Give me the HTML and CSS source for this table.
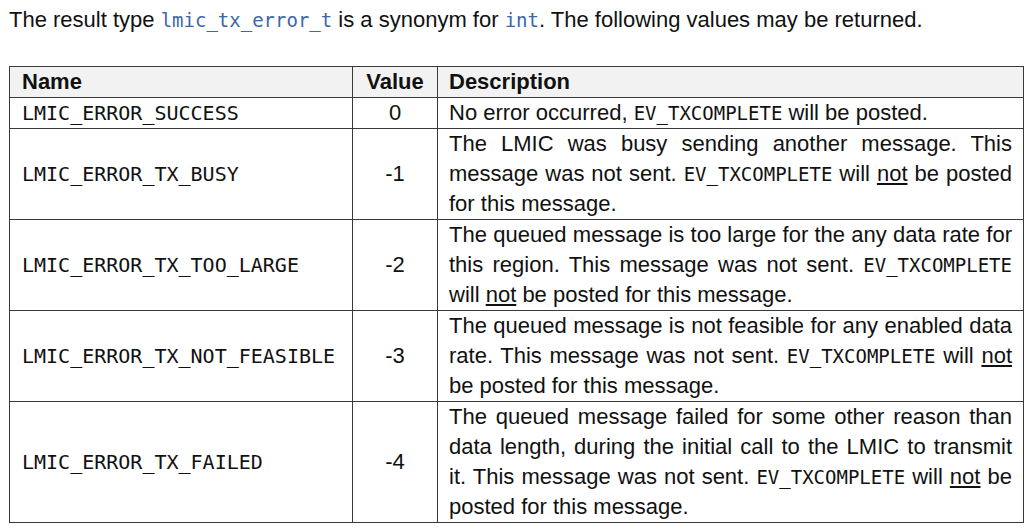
FILE: index.html
```html
<!DOCTYPE html>
<html>
<head>
<meta charset="utf-8">
<link rel="stylesheet" href="styles.css">
</head>
<body>
<p class="intro">The result type <code class="ref">lmic_tx_error_t</code> is a synonym for <code class="ref">int</code>. The following values may be returned.</p>
<table class="errors">
  <colgroup>
    <col class="c-name">
    <col class="c-value">
    <col class="c-desc">
  </colgroup>
  <thead>
    <tr>
      <th class="name">Name</th>
      <th class="value">Value</th>
      <th class="desc">Description</th>
    </tr>
  </thead>
  <tbody>
    <tr>
      <td class="name">LMIC_ERROR_SUCCESS</td>
      <td class="value">0</td>
      <td class="desc">No error occurred, <code>EV_TXCOMPLETE</code> will be posted.</td>
    </tr>
    <tr>
      <td class="name">LMIC_ERROR_TX_BUSY</td>
      <td class="value">-1</td>
      <td class="desc">The LMIC was busy sending another message. This message was not sent. <code>EV_TXCOMPLETE</code> will <u>not</u> be posted for this message.</td>
    </tr>
    <tr>
      <td class="name">LMIC_ERROR_TX_TOO_LARGE</td>
      <td class="value">-2</td>
      <td class="desc">The queued message is too large for the any data rate for this region. This message was not sent. <code>EV_TXCOMPLETE</code> will <u>not</u> be posted for this message.</td>
    </tr>
    <tr>
      <td class="name">LMIC_ERROR_TX_NOT_FEASIBLE</td>
      <td class="value">-3</td>
      <td class="desc">The queued message is not feasible for any enabled data rate. This message was not sent. <code>EV_TXCOMPLETE</code> will <u>not</u> be posted for this message.</td>
    </tr>
    <tr>
      <td class="name">LMIC_ERROR_TX_FAILED</td>
      <td class="value">-4</td>
      <td class="desc">The queued message failed for some other reason than data length, during the initial call to the LMIC to transmit it. This message was not sent. <code>EV_TXCOMPLETE</code> will <u>not</u> be posted for this message.</td>
    </tr>
  </tbody>
</table>
</body>
</html>
```
FILE: styles.css
```css
html, body {
  background: #ffffff;
}
body {
  margin: 0;
  padding: 6px 9px 0 9px;
  font-family: "Liberation Sans", Arial, sans-serif;
  color: #111111;
}
.intro {
  margin: 0;
  font-size: 22px;
  line-height: 28px;
}
.ref {
  font-family: "DejaVu Sans Mono", "Liberation Mono", monospace;
  font-size: 19px;
  color: #3c67a8;
}
.errors {
  margin-top: 32px;
  border-collapse: collapse;
  table-layout: fixed;
  width: 1014px;
}
.c-name { width: 343px; }
.c-value { width: 85px; }
.c-desc { width: 586px; }
.errors th,
.errors td {
  border: 1px solid #3a3a3a;
  padding: 0;
  line-height: 30px;
  vertical-align: middle;
}
.errors thead th {
  background: #f2f2f2;
  font-size: 22px;
  font-weight: bold;
  text-align: left;
  color: #111111;
}
.errors th.name,
.errors td.name {
  padding-left: 12px;
}
.errors th.value,
.errors td.value {
  text-align: center;
}
.errors th.desc,
.errors td.desc {
  padding-left: 11px;
  padding-right: 11px;
}
.errors td.name {
  font-family: "DejaVu Sans Mono", "Liberation Mono", monospace;
  font-size: 20px;
}
.errors td.value {
  font-size: 22px;
}
.errors td.desc {
  font-size: 22px;
  text-align: justify;
}
.errors td.desc code {
  font-family: "DejaVu Sans Mono", "Liberation Mono", monospace;
  font-size: 19px;
}
```
